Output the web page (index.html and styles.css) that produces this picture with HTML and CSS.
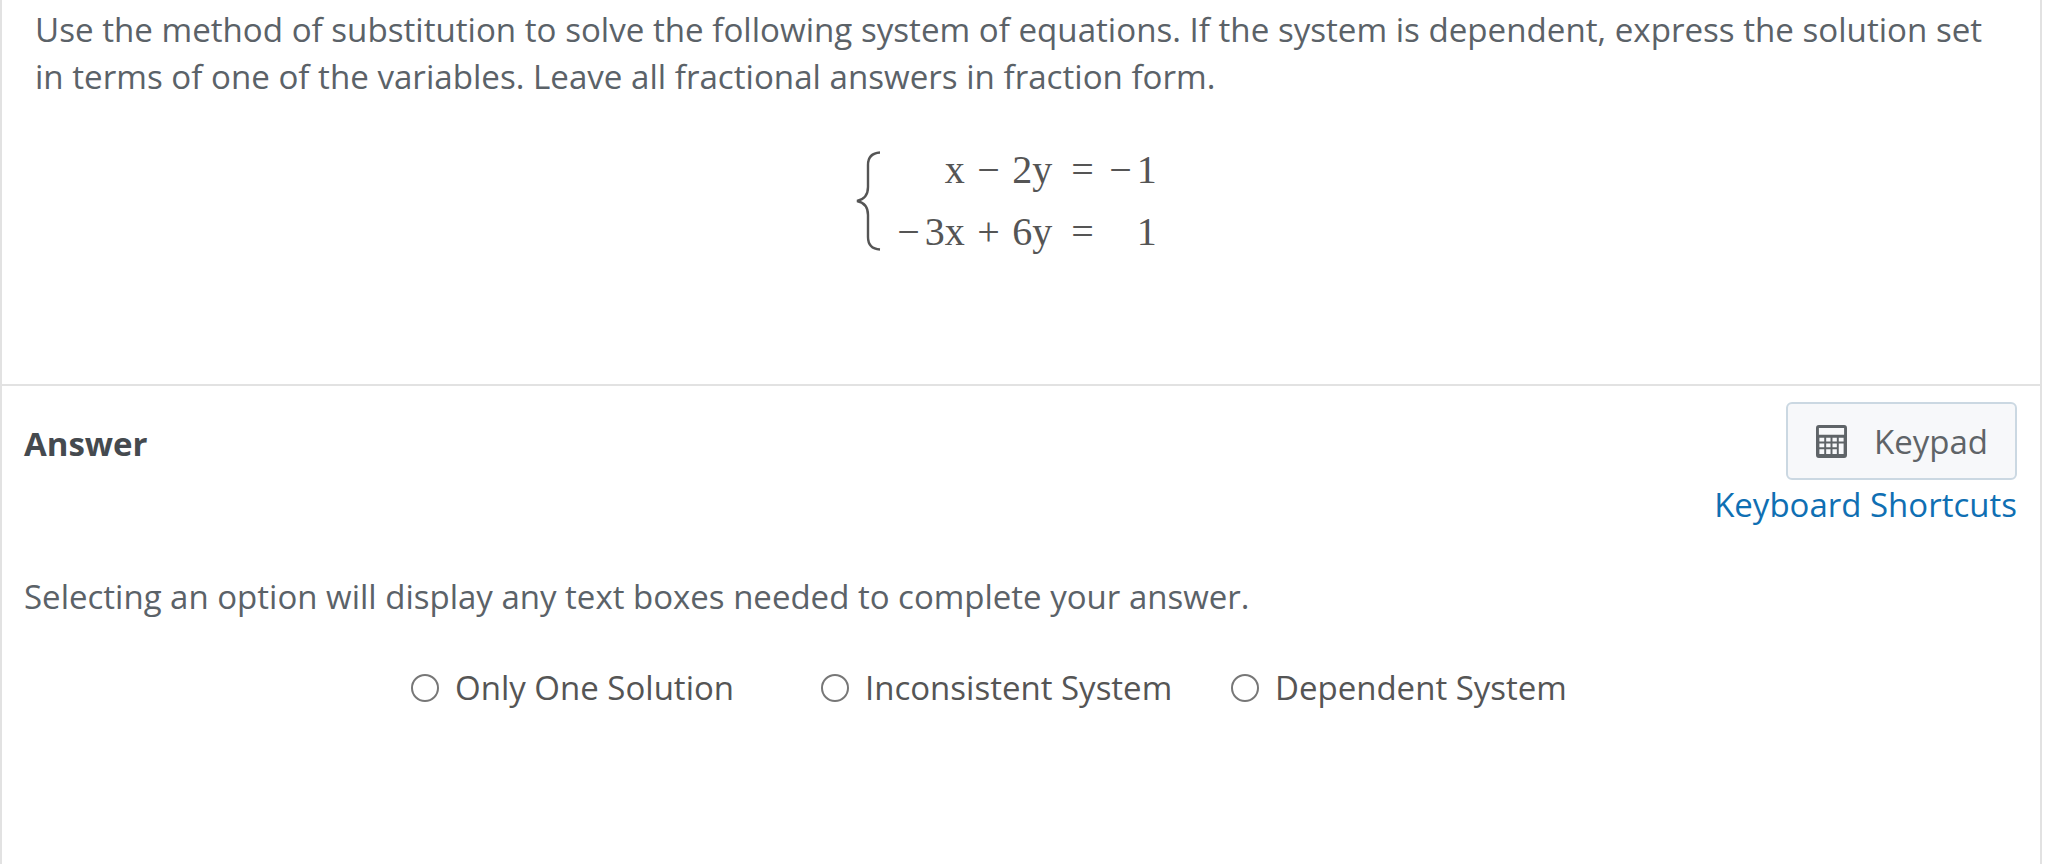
FILE: index.html
```html
<!DOCTYPE html>
<html lang="en">
<head>
<meta charset="utf-8">
<title>Question</title>
<link rel="stylesheet" href="styles.css">
</head>
<body>
<main class="panel">
  <section class="question">
    <p class="prompt">Use the method of substitution to solve the following system of equations. If the system is dependent, express the solution set in terms of one of the variables. Leave all fractional answers in fraction form.</p>
    <div class="system">
      <svg class="brace" viewBox="0 0 28 102" width="28" height="102" aria-hidden="true"><path d="M26 2.500C18 3 14 7 14 15V37C14 45 10 49.500 3 51C10 52.500 14 57 14 65V87C14 95 18 99 26 99.500" fill="none" stroke="#555" stroke-width="2.400"/></svg>
      <div class="equations">
        <span class="lhs">x − 2y</span><span class="eq">=</span><span class="rhs"><span class="neg">−</span>1</span>
        <span class="lhs"><span class="neg">−</span>3x + 6y</span><span class="eq">=</span><span class="rhs">1</span>
      </div>
    </div>
  </section>
  <section class="answer">
    <div class="answer-head">
      <h2 class="answer-title">Answer</h2>
      <div class="tools">
        <button class="keypad" type="button">
          <svg class="calc" viewBox="0 0 32 34" width="31" height="33" aria-hidden="true"><path fill-rule="evenodd" fill="#5f6468" d="M3 0H29A3 3 0 0 1 32 3V31A3 3 0 0 1 29 34H3A3 3 0 0 1 0 31V3A3 3 0 0 1 3 0ZM3 3V10H29V3ZM3.500 13V17H8.500V13ZM10.500 13V17H15V13ZM17 13V17H21.500V13ZM23.500 13V17H28.500V13ZM3.500 19V23H8.500V19ZM10.500 19V23H15V19ZM17 19V23H21.500V19ZM23.500 19V30H28.500V19ZM3.500 25V30H8.500V25ZM10.500 25V30H15V25ZM17 25V30H21.500V25Z"/></svg>
          <span>Keypad</span>
        </button>
        <a class="shortcuts" href="#">Keyboard Shortcuts</a>
      </div>
    </div>
    <p class="hint">Selecting an option will display any text boxes needed to complete your answer.</p>
    <div class="options">
      <label class="option"><span class="radio"></span>Only One Solution</label>
      <label class="option"><span class="radio"></span>Inconsistent System</label>
      <label class="option"><span class="radio"></span>Dependent System</label>
    </div>
  </section>
</main>
</body>
</html>
```
FILE: styles.css
```css
* { box-sizing: border-box; }
html, body { margin: 0; height: 100%; background: #fff; }
body { font-family: "Open Sans", "Liberation Sans", sans-serif; overflow: hidden; }
.panel {
  width: 2042px;
  height: 864px;
  border-left: 2px solid #e2e2e2;
  border-right: 2px solid #e2e2e2;
}
.question {
  height: 386px;
  padding: 6px 36px 0 33px;
  border-bottom: 2px solid #e2e2e2;
}
.prompt {
  margin: 0;
  font-size: 33.13px;
  line-height: 47px;
  color: #5b6268;
}
.system {
  display: flex;
  justify-content: center;
  align-items: center;
  gap: 15px;
  margin-top: 39px;
  padding-right: 28px;
}
.equations {
  display: grid;
  grid-template-columns: auto auto 50px;
  font-family: "Liberation Serif", serif;
  font-size: 40px;
  line-height: 62px;
  word-spacing: 2.500px;
  color: #555;
}
.eq { padding: 0 13px 0 19px; }
.neg { margin-right: 5px; }
.lhs, .rhs { text-align: right; }
.answer { padding: 16px 23px 0 22px; }
.answer-head { display: flex; justify-content: space-between; align-items: flex-start; }
.answer-title {
  margin: 20px 0 0;
  font-size: 33px;
  line-height: 44px;
  font-weight: 700;
  color: #454a4f;
}
.tools { display: flex; flex-direction: column; align-items: flex-end; }
.keypad {
  display: flex;
  align-items: center;
  gap: 27px;
  width: 231px;
  height: 78px;
  padding: 0 0 0 28px;
  background: #f7f8fa;
  border: 2px solid #cbd8e2;
  border-radius: 6px;
  font: inherit;
  font-size: 33px;
  color: #5f6468;
}
.shortcuts {
  margin-top: 3px;
  font-size: 33px;
  line-height: 44px;
  color: #0f6fb3;
  text-decoration: none;
}
.hint {
  margin: 48px 0 0;
  font-size: 33px;
  line-height: 44px;
  color: #5b6268;
}
.options {
  display: grid;
  grid-template-columns: repeat(3, 410px);
  margin-top: 47px;
  padding-left: 387px;
}
.option {
  display: flex;
  align-items: center;
  gap: 16px;
  font-size: 33px;
  line-height: 44px;
  color: #555;
}
.radio {
  width: 28px;
  height: 28px;
  border: 2px solid #777;
  border-radius: 50%;
}
```
